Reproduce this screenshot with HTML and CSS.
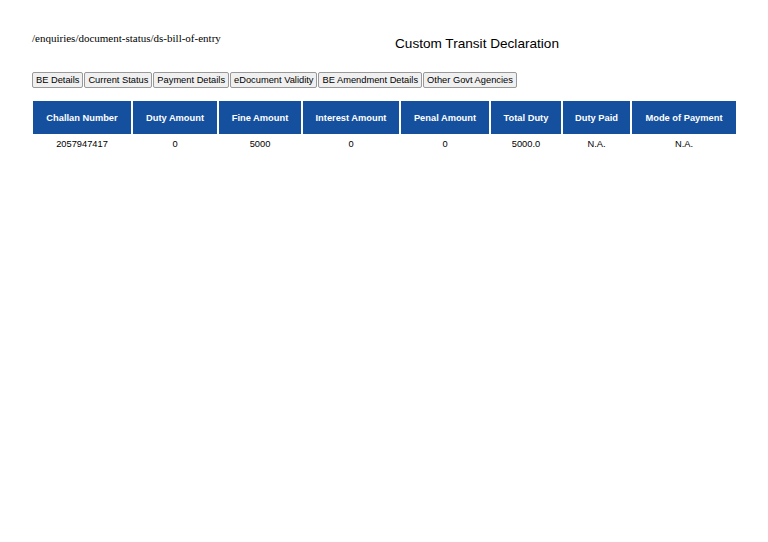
FILE: index.html
```html
<!DOCTYPE html>
<html>
<head>
<meta charset="utf-8">
<link rel="stylesheet" href="styles.css">
</head>
<body>
<div class="page">
  <div class="top">
    <div class="path">/enquiries/document-status/ds-bill-of-entry</div>
    <h1 class="title">Custom Transit Declaration</h1>
  </div>
  <div class="tabs">
    <button class="tab">BE Details</button>
    <button class="tab">Current Status</button>
    <button class="tab">Payment Details</button>
    <button class="tab">eDocument Validity</button>
    <button class="tab">BE Amendment Details</button>
    <button class="tab">Other Govt Agencies</button>
  </div>
  <table class="grid">
    <colgroup>
      <col class="c1"><col class="c2"><col class="c3"><col class="c4">
      <col class="c5"><col class="c6"><col class="c7"><col class="c8">
    </colgroup>
    <thead>
      <tr>
        <th>Challan Number</th>
        <th>Duty Amount</th>
        <th>Fine Amount</th>
        <th>Interest Amount</th>
        <th>Penal Amount</th>
        <th>Total Duty</th>
        <th>Duty Paid</th>
        <th>Mode of Payment</th>
      </tr>
    </thead>
    <tbody>
      <tr>
        <td>2057947417</td>
        <td>0</td>
        <td>5000</td>
        <td>0</td>
        <td>0</td>
        <td>5000.0</td>
        <td>N.A.</td>
        <td>N.A.</td>
      </tr>
    </tbody>
  </table>
</div>
</body>
</html>
```

FILE: styles.css
```css
html, body {
  margin: 0;
  padding: 0;
  background: #ffffff;
}
.page {
  padding: 32px 0 0 32px;
  font-family: "Liberation Sans", Arial, sans-serif;
  color: #000;
}
.top {
  display: flex;
  align-items: flex-start;
  height: 40px;
}
.path {
  font-family: "Liberation Serif", "Times New Roman", serif;
  font-size: 11px;
  width: 363px;
  line-height: 12px;
}
.title {
  margin: 4px 0 0 0;
  font-size: 13.6px;
  font-weight: normal;
  line-height: 16px;
}
.tabs {
  display: flex;
  gap: 1px;
  height: 16px;
}
.tab {
  font-family: "Liberation Sans", Arial, sans-serif;
  font-size: 9.3px;
  padding: 0 3px;
  height: 16px;
  line-height: 14px;
  background: #f0f0f0;
  border: 1px solid #999999;
  border-radius: 2px;
  color: #000;
}
.grid {
  margin-top: 13px;
  margin-left: -1px;
  border-collapse: separate;
  border-spacing: 2px 0;
  table-layout: fixed;
  width: 705px;
}
.c1 { width: 98px; }
.c2 { width: 84px; }
.c3 { width: 82px; }
.c4 { width: 96px; }
.c5 { width: 88px; }
.c6 { width: 70px; }
.c7 { width: 67px; }
.c8 { width: 104px; }
.grid th {
  background: #15509e;
  color: #fff;
  font-size: 9.3px;
  font-weight: bold;
  height: 33px;
  padding: 0;
  text-align: center;
}
.grid td {
  font-size: 9.3px;
  text-align: center;
  padding: 0;
  height: 19px;
}
```
